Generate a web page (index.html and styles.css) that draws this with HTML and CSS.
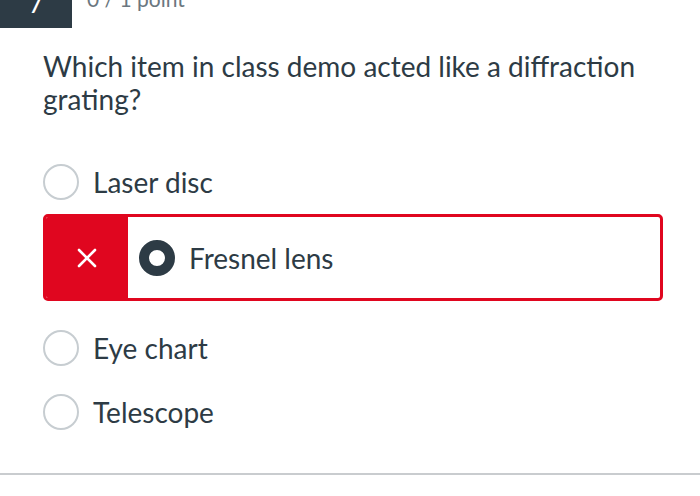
FILE: index.html
```html
<!DOCTYPE html>
<html>
<head>
<meta charset="utf-8">
<link rel="stylesheet" href="styles.css">
</head>
<body>
<div class="page">
  <div class="header">
    <div class="qnum">7</div>
    <div class="points">0 / 1 point</div>
  </div>
  <div class="question">Which item in class demo acted like a diffraction grating?</div>
  <div class="answers">
    <div class="answer">
      <span class="radio"></span>
      <span class="label">Laser disc</span>
    </div>
    <div class="answer wrong">
      <div class="mark">
        <svg width="20" height="20" viewBox="0 0 20 20"><path d="M2 2 L18 18 M18 2 L2 18" stroke="#fff" stroke-width="2.6" stroke-linecap="round" fill="none"/></svg>
      </div>
      <div class="wrong-body">
        <span class="radio checked"></span>
        <span class="label">Fresnel lens</span>
      </div>
    </div>
    <div class="answer">
      <span class="radio"></span>
      <span class="label">Eye chart</span>
    </div>
    <div class="answer">
      <span class="radio"></span>
      <span class="label">Telescope</span>
    </div>
  </div>
</div>
</body>
</html>
```
FILE: styles.css
```css
html, body {
  margin: 0;
  padding: 0;
  background: #fff;
}
body {
  font-family: Lato, "Open Sans", sans-serif;
  color: #2d3b45;
  width: 700px;
  height: 496px;
  overflow: hidden;
}
.page {
  display: flow-root;
  border-bottom: 2px solid #c9cccf;
  height: 473px;
  box-sizing: content-box;
}
.header {
  display: flex;
  align-items: stretch;
  margin-top: -24px;
  height: 52px;
}
.qnum {
  width: 72px;
  background: #2d3b45;
  color: #fff;
  font-size: 26px;
  line-height: 51px;
  text-align: center;
  padding-top: 2px;
  box-sizing: border-box;
}
.points {
  margin-left: 15px;
  font-size: 21px;
  line-height: 46px;
  color: #6b7780;
}
.question {
  margin: 22px 40px 0 43px;
  font-size: 28px;
  line-height: 33px;
}
.answers {
  margin: 34px 37px 0 43px;
  display: flex;
  flex-direction: column;
}
.answer {
  display: flex;
  align-items: center;
  height: 64px;
}
.radio {
  width: 36px;
  height: 36px;
  border: 2px solid #c7cdd1;
  border-radius: 50%;
  box-sizing: border-box;
  flex: none;
}
.radio.checked {
  border: 10.5px solid #2d3b45;
}
.label {
  margin-left: 14px;
  font-size: 28px;
  line-height: 32px;
}
.answer.wrong {
  height: 87px;
  border: 3px solid #e0061f;
  border-radius: 5px;
  box-sizing: border-box;
  margin-bottom: 15px;
  align-items: stretch;
  overflow: hidden;
}
.mark {
  width: 82px;
  background: #e0061f;
  display: flex;
  align-items: center;
  justify-content: center;
  flex: none;
}
.wrong-body {
  display: flex;
  align-items: center;
  padding-left: 11px;
}
```
